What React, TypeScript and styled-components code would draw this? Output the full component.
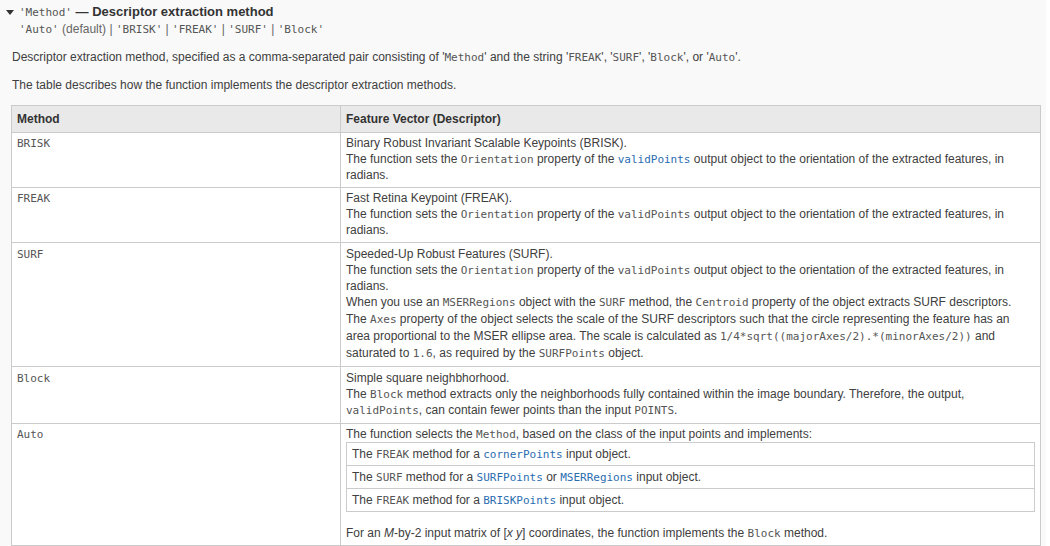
import React from 'react';
import styled, { createGlobalStyle } from 'styled-components';

const GlobalStyle = createGlobalStyle`
  body {
    margin: 0;
    background: #ffffff;
    font-family: "Liberation Sans", Arial, sans-serif;
    font-size: 12px;
    color: #404040;
  }
`;

const Page = styled.div`
  width: 1046px;
  min-height: 546px;
  background: #f9f9f9;
  padding-top: 3px;
  box-sizing: border-box;
`;

const Head = styled.div`
  display: flex;
  align-items: center;
  padding-left: 6px;
  font-size: 13px;
  line-height: 18px;
  font-weight: bold;
  color: #333;
`;

const Caret = styled.span`
  width: 0;
  height: 0;
  border-left: 4px solid transparent;
  border-right: 4px solid transparent;
  border-top: 5px solid #333;
  margin-right: 5px;
`;

const Code = styled.code<{ $link?: boolean }>`
  font-family: "DejaVu Sans Mono", "Liberation Mono", monospace;
  font-size: 11px;
  line-height: 1;
  font-weight: normal;
  color: ${(p) => (p.$link ? '#2a6cb0' : '#555')};
`;

const Values = styled.div`
  padding-left: 19px;
  line-height: 16px;
  color: #666;
`;

const Para = styled.p`
  margin: 12px 0 0 12px;
  line-height: 16px;
`;

const Table = styled.table`
  margin: 12px 0 0 11px;
  width: 1030px;
  border-collapse: collapse;
  table-layout: fixed;
  background: #fff;
`;

const MethodCol = styled.col`
  width: 329px;
`;

const Th = styled.th`
  background: #e9e9e9;
  border: 1px solid #cbcbcb;
  padding: 5px;
  text-align: left;
  font-weight: bold;
  line-height: 16px;
  color: #333;
`;

const Td = styled.td<{ $top?: number; $bottom?: number }>`
  border: 1px solid #cbcbcb;
  padding: ${(p) => p.$top ?? 2}px 5px ${(p) => p.$bottom ?? 4}px;
  vertical-align: top;
  line-height: 16px;
`;

const Line = styled.div<{ $tall?: boolean }>`
  line-height: ${(p) => (p.$tall ? 17 : 16)}px;
`;

const Inner = styled.table`
  width: 100%;
  border-collapse: collapse;
  margin-bottom: 13px;
`;

const InnerTd = styled.td`
  border: 1px solid #cbcbcb;
  padding: 3px 5px;
  line-height: 16px;
`;

const Orientation = (link: boolean) => (
  <>
    The function sets the <Code>Orientation</Code> property of the <Code $link={link}>validPoints</Code> output object to the orientation of the extracted features, in radians.
  </>
);

export default function App() {
  return (
    <Page>
      <GlobalStyle />
      <Head>
        <Caret />
        <span>
          <Code>'Method'</Code> — Descriptor extraction method
        </span>
      </Head>
      <Values>
        <Code>'Auto'</Code> (default) | <Code>'BRISK'</Code> | <Code>'FREAK'</Code> | <Code>'SURF'</Code> | <Code>'Block'</Code>
      </Values>
      <Para>
        Descriptor extraction method, specified as a comma-separated pair consisting of '<Code>Method</Code>' and the string '<Code>FREAK</Code>', '<Code>SURF</Code>', '<Code>Block</Code>', or '<Code>Auto</Code>'.
      </Para>
      <Para>The table describes how the function implements the descriptor extraction methods.</Para>
      <Table>
        <colgroup>
          <MethodCol />
          <col />
        </colgroup>
        <thead>
          <tr>
            <Th>Method</Th>
            <Th>Feature Vector (Descriptor)</Th>
          </tr>
        </thead>
        <tbody>
          <tr>
            <Td><Code>BRISK</Code></Td>
            <Td>
              <Line>Binary Robust Invariant Scalable Keypoints (BRISK).</Line>
              <Line>{Orientation(true)}</Line>
            </Td>
          </tr>
          <tr>
            <Td><Code>FREAK</Code></Td>
            <Td>
              <Line>Fast Retina Keypoint (FREAK).</Line>
              <Line>{Orientation(false)}</Line>
            </Td>
          </tr>
          <tr>
            <Td $top={3}><Code>SURF</Code></Td>
            <Td $top={3}>
              <Line>Speeded-Up Robust Features (SURF).</Line>
              <Line>{Orientation(false)}</Line>
              <Line $tall>
                When you use an <Code>MSERRegions</Code> object with the <Code>SURF</Code> method, the <Code>Centroid</Code> property of the object extracts SURF descriptors.
              </Line>
              <Line $tall>
                The <Code>Axes</Code> property of the object selects the scale of the SURF descriptors such that the circle representing the feature has an area proportional to the MSER ellipse area. The scale is calculated as <Code>1/4*sqrt((majorAxes/2).*(minorAxes/2))</Code> and saturated to <Code>1.6</Code>, as required by the <Code>SURFPoints</Code> object.
              </Line>
            </Td>
          </tr>
          <tr>
            <Td $top={3} $bottom={5}><Code>Block</Code></Td>
            <Td $top={3} $bottom={5}>
              <Line>Simple square neighbhorhood.</Line>
              <Line>
                The <Code>Block</Code> method extracts only the neighborhoods fully contained within the image boundary. Therefore, the output, <Code>validPoints</Code>, can contain fewer points than the input <Code>POINTS</Code>.
              </Line>
            </Td>
          </tr>
          <tr>
            <Td><Code>Auto</Code></Td>
            <Td>
              <Line>
                The function selects the <Code>Method</Code>, based on the class of the input points and implements:
              </Line>
              <Inner>
                <tbody>
                  <tr>
                    <InnerTd>
                      The <Code>FREAK</Code> method for a <Code $link>cornerPoints</Code> input object.
                    </InnerTd>
                  </tr>
                  <tr>
                    <InnerTd>
                      The <Code>SURF</Code> method for a <Code $link>SURFPoints</Code> or <Code $link>MSERRegions</Code> input object.
                    </InnerTd>
                  </tr>
                  <tr>
                    <InnerTd>
                      The <Code>FREAK</Code> method for a <Code $link>BRISKPoints</Code> input object.
                    </InnerTd>
                  </tr>
                </tbody>
              </Inner>
              <Line>
                For an <i>M</i>-by-2 input matrix of [<i>x y</i>] coordinates, the function implements the <Code>Block</Code> method.
              </Line>
            </Td>
          </tr>
        </tbody>
      </Table>
    </Page>
  );
}
